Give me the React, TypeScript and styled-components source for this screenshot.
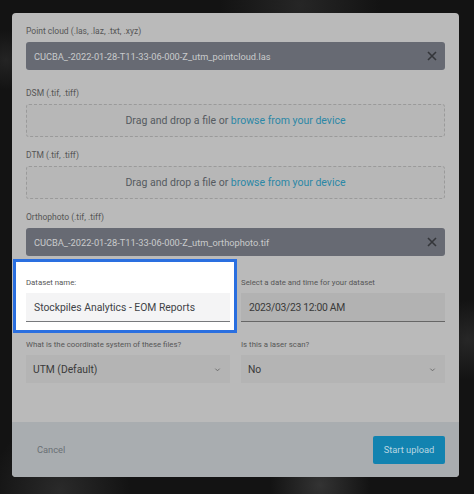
import React from 'react';
import styled, { createGlobalStyle } from 'styled-components';

const GlobalStyle = createGlobalStyle`
  html, body {
    margin: 0;
    padding: 0;
    height: 494px;
    overflow: hidden;
    background: #131313;
    font-family: Roboto, "Noto Sans", sans-serif;
  }
`;

const Backdrop = styled.div`
  width: 474px;
  height: 494px;
  box-sizing: border-box;
  padding: 13px 15px 17px 12px;
  background:
    radial-gradient(circle at 320px 485px, #333333 0, transparent 50px),
    radial-gradient(circle at 60px 490px, #2a2a2a 0, transparent 70px),
    radial-gradient(circle at 468px 340px, #272727 0, transparent 40px),
    radial-gradient(circle at 6px 60px, #242424 0, transparent 30px),
    radial-gradient(circle at 300px 5px, #262626 0, transparent 80px),
    #131313;
`;

const Modal = styled.div`
  height: 464px;
  display: flex;
  flex-direction: column;
  border-radius: 4px;
  overflow: hidden;
  background: #bababa;
`;

const Body = styled.div`
  flex: 1;
  display: flex;
  flex-direction: column;
  gap: 12px;
  padding: 12px 14px 0;
`;

const Field = styled.div`
  display: flex;
  flex-direction: column;
  gap: 5px;
`;

const Label = styled.label`
  font-size: 8.5px;
  line-height: 12px;
  color: #565656;
  white-space: nowrap;
`;

const FormLabel = styled(Label)`
  font-size: 7.8px;
`;

const FileChip = styled.div`
  height: 28px;
  margin-bottom: 5px;
  display: flex;
  align-items: center;
  justify-content: space-between;
  padding: 0 8px;
  border-radius: 3px;
  background: #676a73;
  color: #c9cacc;
  font-size: 9.25px;
`;

const RemoveIcon = styled.svg`
  width: 10px;
  height: 10px;
  stroke: #34363a;
  stroke-width: 1.6;
  fill: none;
`;

const DropZone = styled.div`
  height: 33px;
  box-sizing: border-box;
  display: flex;
  align-items: center;
  justify-content: center;
  border: 1px dashed #9a9a9a;
  border-radius: 3px;
  background: #b7b7b7;
  color: #555a60;
  font-size: 10.5px;
  white-space: pre;
`;

const BrowseLink = styled.span`
  color: #2b87a6;
`;

const FormGrid = styled.div`
  display: grid;
  grid-template-columns: 204px 204px;
  column-gap: 11px;
  row-gap: 17px;
  margin-top: 4px;
`;

const FormField = styled(Field)`
  gap: 4px;
`;

const HighlightedField = styled(FormField)`
  position: relative;

  &::before {
    content: '';
    position: absolute;
    left: -13px;
    top: -18px;
    width: 218px;
    height: 68px;
    border: 3px solid #2a6fe0;
    background: #ffffff;
  }

  & > * {
    position: relative;
  }
`;

const TextInput = styled.div<{ $active?: boolean }>`
  height: 29px;
  box-sizing: border-box;
  display: flex;
  align-items: center;
  padding: 0 8px;
  border-bottom: 1px solid ${({ $active }) => ($active ? '#77797c' : '#666666')};
  background: ${({ $active }) => ($active ? '#f4f4f5' : '#b2b2b2')};
  color: ${({ $active }) => ($active ? '#3f4347' : '#3a3a3a')};
  font-size: 10.35px;
`;

const DateInput = styled(TextInput)`
  letter-spacing: -0.3px;
`;

const SelectBox = styled.div`
  height: 28px;
  display: flex;
  align-items: center;
  justify-content: space-between;
  padding: 0 9px 0 7px;
  background: #b4b4b4;
  color: #3a3a3a;
  font-size: 10.3px;
`;

const Chevron = styled.svg`
  width: 7px;
  height: 7px;
  stroke: #6b6b6b;
  stroke-width: 1.1;
  fill: none;
`;

const Footer = styled.div`
  height: 55px;
  display: flex;
  align-items: center;
  justify-content: space-between;
  padding: 0 14px 0 25px;
  background: #a9adb0;
`;

const CancelButton = styled.button`
  padding: 0;
  border: none;
  background: none;
  color: #6a7075;
  font-family: inherit;
  font-size: 9.3px;
`;

const StartButton = styled.button`
  width: 72px;
  height: 28px;
  padding: 0;
  border: none;
  border-radius: 2px;
  background: #1283b0;
  color: #b9d6e2;
  font-family: inherit;
  font-size: 9.3px;
`;

const Remove = () => (
  <RemoveIcon viewBox="0 0 10 10">
    <path d="M1 1l8 8M9 1l-8 8" />
  </RemoveIcon>
);

const Down = () => (
  <Chevron viewBox="0 0 8 8">
    <path d="M1.5 3l2.5 2.5L6.5 3" />
  </Chevron>
);

const Drop = () => (
  <DropZone>
    Drag and drop a file or <BrowseLink>browse from your device</BrowseLink>
  </DropZone>
);

export default function App() {
  return (
    <Backdrop>
      <GlobalStyle />
      <Modal>
        <Body>
          <Field>
            <Label>Point cloud (.las, .laz, .txt, .xyz)</Label>
            <FileChip>
              CUCBA_-2022-01-28-T11-33-06-000-Z_utm_pointcloud.las
              <Remove />
            </FileChip>
          </Field>
          <Field>
            <Label>DSM (.tif, .tiff)</Label>
            <Drop />
          </Field>
          <Field>
            <Label>DTM (.tif, .tiff)</Label>
            <Drop />
          </Field>
          <Field>
            <Label>Orthophoto (.tif, .tiff)</Label>
            <FileChip>
              CUCBA_-2022-01-28-T11-33-06-000-Z_utm_orthophoto.tif
              <Remove />
            </FileChip>
          </Field>
          <FormGrid>
            <HighlightedField>
              <FormLabel>Dataset name:</FormLabel>
              <TextInput $active>Stockpiles Analytics - EOM Reports</TextInput>
            </HighlightedField>
            <FormField>
              <FormLabel>Select a date and time for your dataset</FormLabel>
              <DateInput>2023/03/23 12:00 AM</DateInput>
            </FormField>
            <FormField>
              <FormLabel>What is the coordinate system of these files?</FormLabel>
              <SelectBox>
                UTM (Default)
                <Down />
              </SelectBox>
            </FormField>
            <FormField>
              <FormLabel>Is this a laser scan?</FormLabel>
              <SelectBox>
                No
                <Down />
              </SelectBox>
            </FormField>
          </FormGrid>
        </Body>
        <Footer>
          <CancelButton>Cancel</CancelButton>
          <StartButton>Start upload</StartButton>
        </Footer>
      </Modal>
    </Backdrop>
  );
}
